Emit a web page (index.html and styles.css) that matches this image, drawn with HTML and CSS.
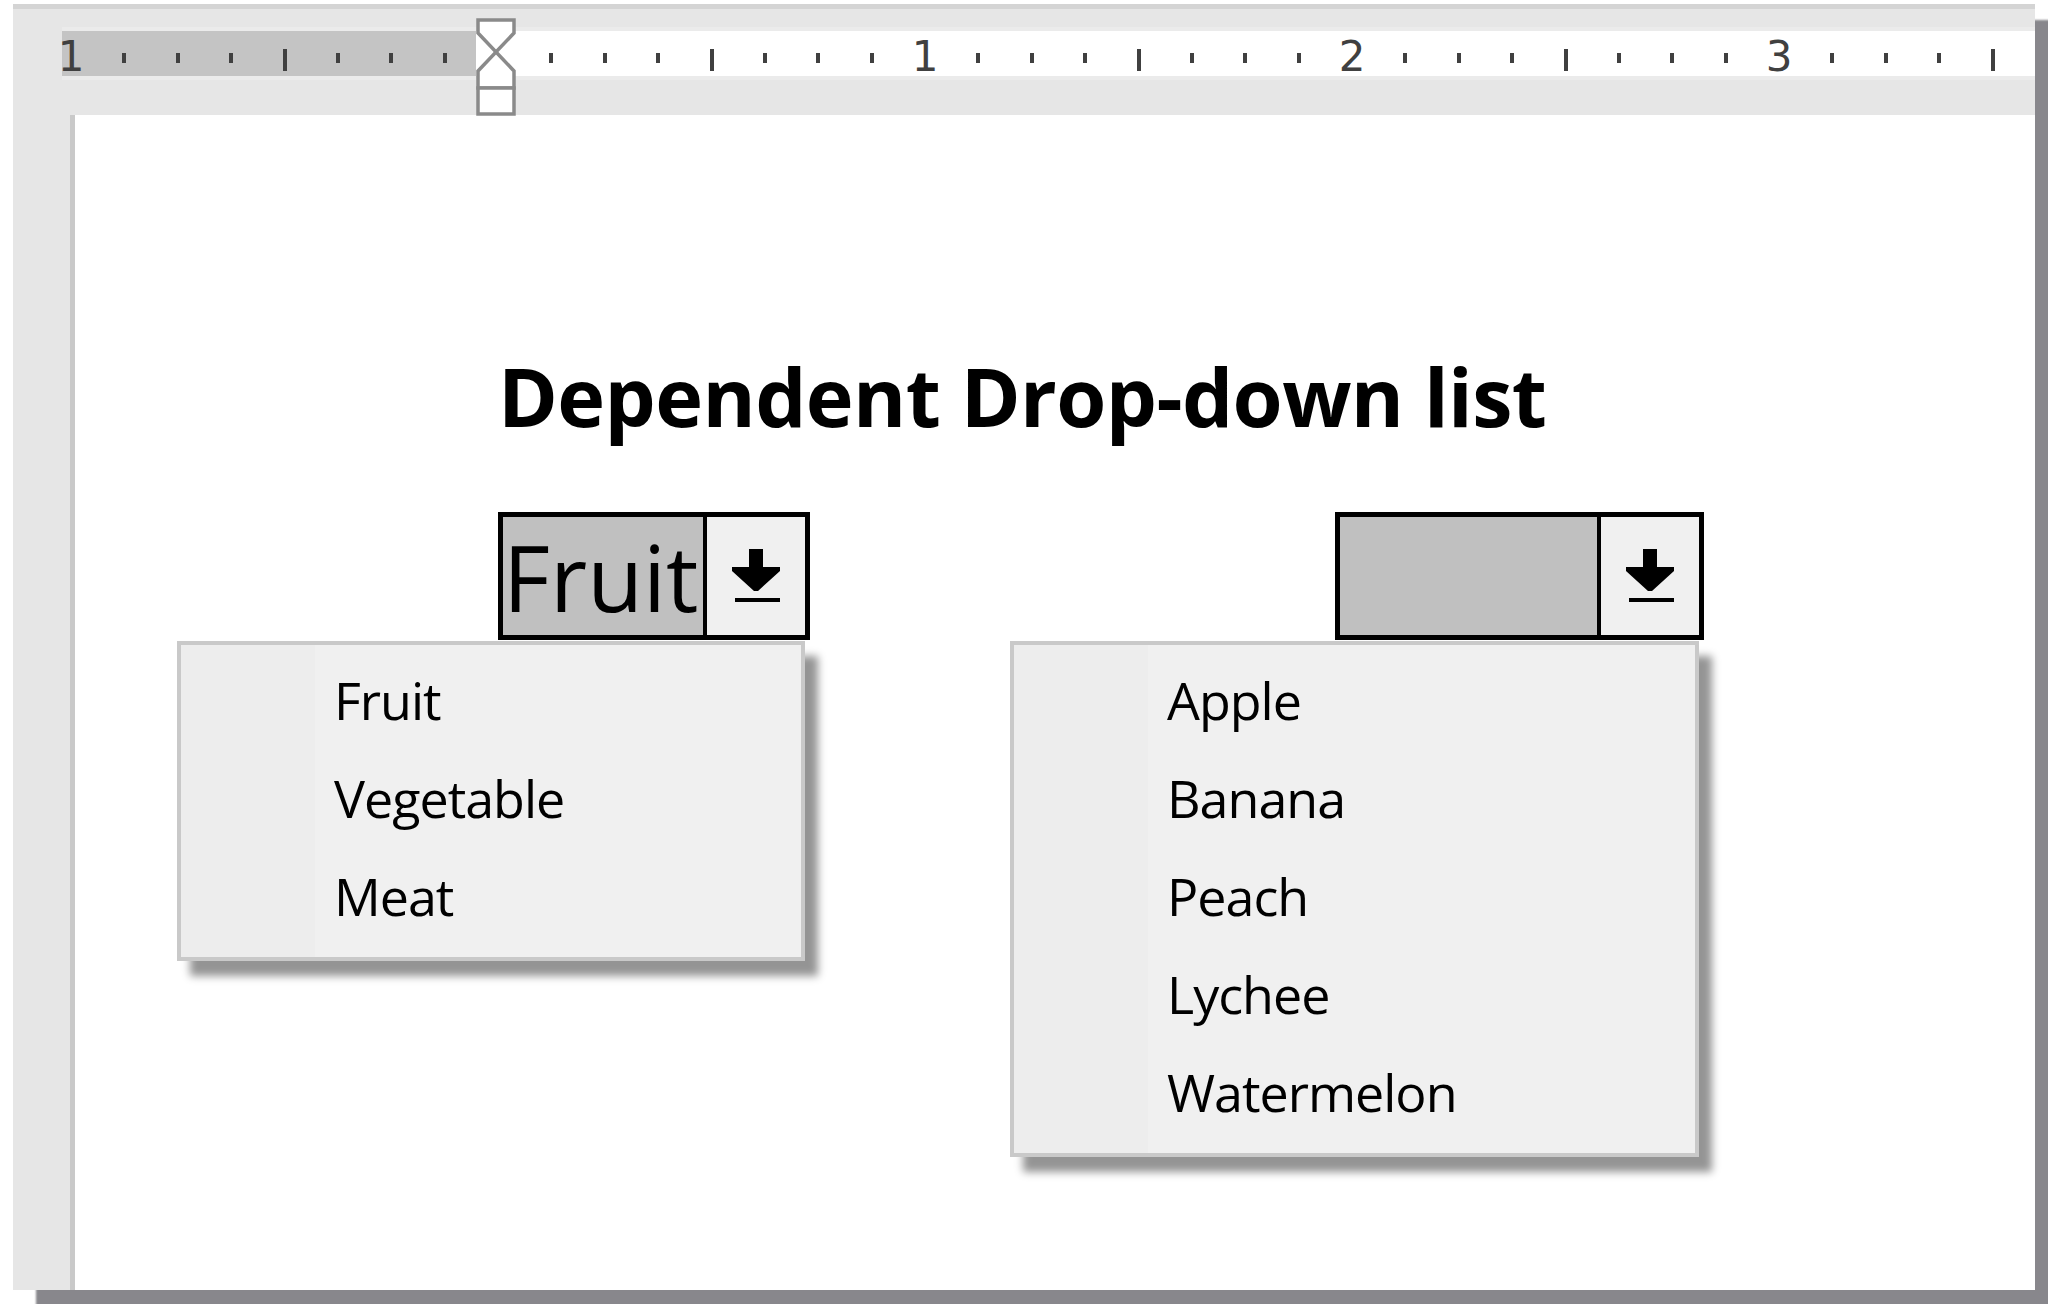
FILE: index.html
```html
<!DOCTYPE html>
<html lang="en">
  <head>
    <meta charset="UTF-8" />
    <title>Dependent Drop-down list</title>
    <link rel="stylesheet" href="styles.css">
  </head>
  <body>
    <div class="window">
      <div class="topbar">
        <div class="ruler">
          <div class="track">
            <div class="scale">
              <div class="cell"><span class="num">1</span></div>
              <div class="cell"><i class="tick"></i></div>
              <div class="cell"><i class="tick"></i></div>
              <div class="cell"><i class="tick"></i></div>
              <div class="cell"><i class="tick big"></i></div>
              <div class="cell"><i class="tick"></i></div>
              <div class="cell"><i class="tick"></i></div>
              <div class="cell"><i class="tick"></i></div>
              <div class="cell"></div>
              <div class="cell"><i class="tick"></i></div>
              <div class="cell"><i class="tick"></i></div>
              <div class="cell"><i class="tick"></i></div>
              <div class="cell"><i class="tick big"></i></div>
              <div class="cell"><i class="tick"></i></div>
              <div class="cell"><i class="tick"></i></div>
              <div class="cell"><i class="tick"></i></div>
              <div class="cell"><span class="num">1</span></div>
              <div class="cell"><i class="tick"></i></div>
              <div class="cell"><i class="tick"></i></div>
              <div class="cell"><i class="tick"></i></div>
              <div class="cell"><i class="tick big"></i></div>
              <div class="cell"><i class="tick"></i></div>
              <div class="cell"><i class="tick"></i></div>
              <div class="cell"><i class="tick"></i></div>
              <div class="cell"><span class="num">2</span></div>
              <div class="cell"><i class="tick"></i></div>
              <div class="cell"><i class="tick"></i></div>
              <div class="cell"><i class="tick"></i></div>
              <div class="cell"><i class="tick big"></i></div>
              <div class="cell"><i class="tick"></i></div>
              <div class="cell"><i class="tick"></i></div>
              <div class="cell"><i class="tick"></i></div>
              <div class="cell"><span class="num">3</span></div>
              <div class="cell"><i class="tick"></i></div>
              <div class="cell"><i class="tick"></i></div>
              <div class="cell"><i class="tick"></i></div>
              <div class="cell"><i class="tick big"></i></div>
            </div>
          </div>
        </div>
        <!-- indent marker -->
        <svg class="indent" width="40" height="98" viewBox="0 0 40 98">
          <path d="M2 2 H38 V15 L20 34 L2 15 Z" fill="#fff" stroke="#8a8a8a" stroke-width="3.5" />
          <path d="M20 34 L38 53 V70 H2 V53 Z" fill="#fff" stroke="#8a8a8a" stroke-width="3.5" />
          <rect x="2" y="70" width="36" height="26" fill="#fff" stroke="#8a8a8a" stroke-width="3.5" />
        </svg>
      </div>

      <div class="main">
        <div class="gutter"></div>
        <div class="page">
          <h1 class="title">Dependent Drop-down list</h1>

          <div class="fields">
            <div class="field field-cat">
              <div class="combo">
                <div class="value">Fruit</div>
                <div class="btn">
                  <svg width="48" height="54" viewBox="0 0 48 54">
                    <path d="M17 0 H31 V18 H48 V22 L26 42 H22 L0 22 V18 H17 Z" fill="#000" />
                    <rect x="3" y="49" width="45" height="4" fill="#000" />
                  </svg>
                </div>
              </div>
              <ul class="menu">
                <li>Fruit</li>
                <li>Vegetable</li>
                <li>Meat</li>
              </ul>
            </div>

            <div class="field field-item">
              <div class="combo">
                <div class="value"></div>
                <div class="btn">
                  <svg width="48" height="54" viewBox="0 0 48 54">
                    <path d="M17 0 H31 V18 H48 V22 L26 42 H22 L0 22 V18 H17 Z" fill="#000" />
                    <rect x="3" y="49" width="45" height="4" fill="#000" />
                  </svg>
                </div>
              </div>
              <ul class="menu">
                <li>Apple</li>
                <li>Banana</li>
                <li>Peach</li>
                <li>Lychee</li>
                <li>Watermelon</li>
              </ul>
            </div>
          </div>
        </div>
      </div>
    </div>
  </body>
</html>
```

FILE: styles.css
```css
html,
body {
  margin: 0;
  height: 1304px;
  overflow: hidden;
  background: #fff;
}

.window {
  position: relative;
  display: flex;
  flex-direction: column;
  box-sizing: border-box;
  width: 2022px;
  height: 1286px;
  margin: 4px 0 0 13px;
  background: #e6e6e6;
  border-top: 5px solid #d4d4d4;
  box-shadow: 23px 16px 2px #88878c;
}

/* ruler */
.topbar {
  position: relative;
  height: 106px;
  box-sizing: border-box;
  padding: 18px 0 0 49px;
}

.ruler {
  height: 45px;
  border-top: 4px solid #ebebeb;
  border-bottom: 4px solid #ebebeb;
}

.track {
  height: 45px;
  background: linear-gradient(to right, #c4c4c4 0, #c4c4c4 414px, #fff 414px);
}

.scale {
  display: flex;
  margin-left: -17.7px;
}

.cell {
  flex: none;
  width: 53.375px;
  height: 45px;
  display: flex;
  justify-content: center;
  align-items: flex-start;
}

.tick {
  width: 4px;
  height: 10px;
  margin-top: 22px;
  background: #404040;
}

.tick.big {
  height: 22px;
  margin-top: 18px;
}

.num {
  margin-top: 6px;
  font-family: "DejaVu Sans", sans-serif;
  font-size: 42px;
  line-height: 40px;
  color: #404040;
}

.indent {
  position: absolute;
  left: 463px;
  top: 9px;
}

/* document */
.main {
  flex: 1;
  display: flex;
}

.gutter {
  width: 57px;
}

.page {
  flex: 1;
  background: #fff;
  border-left: 5px solid #c9c9c9;
  padding-top: 240px;
  font-family: "Open Sans", "Noto Sans", sans-serif;
}

.title {
  margin: 0 0 0 423px;
  font-size: 81px;
  line-height: 81px;
  font-weight: 700;
  letter-spacing: -0.6px;
  color: #000;
}

.fields {
  display: flex;
  margin: 76px 0 0 423px;
  gap: 525px;
}

.field {
  position: relative;
}

.combo {
  display: flex;
  height: 128px;
  box-sizing: border-box;
  border: 5px solid #000;
}

.value {
  width: 200px;
  background: #c0c0c0;
  white-space: nowrap;
  font-size: 91px;
  line-height: 118px;
  padding-top: 1px;
  letter-spacing: 0;
  color: #000;
}

.field-item .value {
  width: 257px;
}

.btn {
  width: 98px;
  border-left: 4px solid #000;
  background: #f0f0f0;
  display: flex;
  align-items: center;
  justify-content: center;
}

.menu {
  position: absolute;
  top: calc(100% + 1px);
  right: 5px;
  margin: 0;
  padding: 6px 0 12px 0;
  list-style: none;
  border: 4px solid #c9c9c9;
  background: linear-gradient(to right, #ededed 0, #ededed 134px, #f0f0f0 134px);
  box-shadow: 13px 15px 8px rgba(0, 0, 0, 0.42);
}

.field-cat .menu {
  width: 620px;
}

.field-item .menu {
  width: 681px;
}

.menu li {
  padding-left: 153px;
  font-size: 52px;
  line-height: 98px;
  letter-spacing: -1px;
  color: #000;
}
```
